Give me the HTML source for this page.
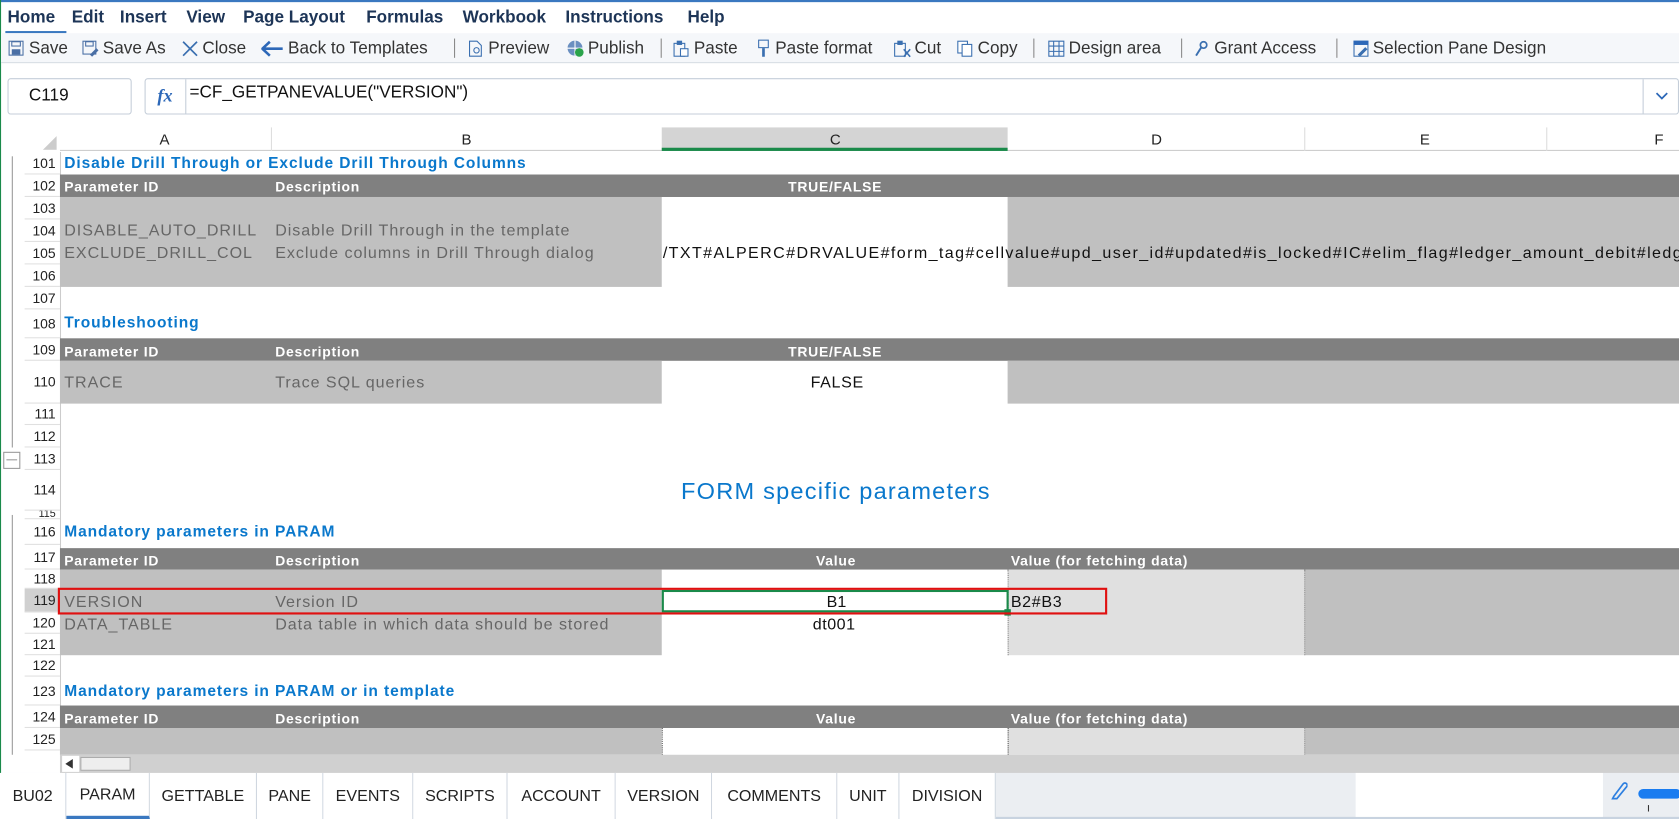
<!DOCTYPE html>
<html><head><meta charset="utf-8"><style>
*{margin:0;padding:0;box-sizing:border-box}
html,body{width:1679px;height:819px;overflow:hidden;background:#fff;font-family:"Liberation Sans",sans-serif}
#w{position:absolute;left:0;top:0;width:1568px;height:765px;transform:scale(1.07079,1.07059);transform-origin:0 0;overflow:hidden}
.a{position:absolute;white-space:nowrap}
.m{font-size:16px;font-weight:bold;color:#1d3557;top:8px}
.t{font-size:16px;color:#333;top:37px}
.sep{position:absolute;top:36px;width:1px;height:18px;background:#888}
.rh{position:absolute;left:23px;width:33px;text-align:right;padding-right:4px;font-size:13px;color:#222;border-bottom:1px solid #e0e0e0}
.ttl{color:#0a78cc;font-weight:bold;font-size:14.5px;letter-spacing:0.85px}
.hdr{background:#808080;color:#fff;font-weight:bold;font-size:13px;letter-spacing:0.7px}
.g{background:#c0c0c0}
.lg{background:#e0e0e0}
.c{font-size:15px;color:#666;letter-spacing:0.9px}
.tab{position:absolute;top:722px;height:43px;background:#fff;border-right:1px solid #d0d7e0;font-size:15px;color:#222;text-align:center;line-height:43px}
</style></head><body><div id="w">
<div class="a" style="left:0;top:0;width:1568px;height:2px;background:#3a78c0"></div>
<div class="a" style="left:0;top:0;width:1px;height:722px;background:#1a8a4a"></div>
<!-- menu -->
<div class="a m" style="left:7px">Home</div>
<div class="a" style="left:5px;top:29px;width:57px;height:2px;background:#3a78c0"></div>
<div class="a m" style="left:67px">Edit</div>
<div class="a m" style="left:112px">Insert</div>
<div class="a m" style="left:174px">View</div>
<div class="a m" style="left:227px">Page Layout</div>
<div class="a m" style="left:342px">Formulas</div>
<div class="a m" style="left:432px">Workbook</div>
<div class="a m" style="left:528px">Instructions</div>
<div class="a m" style="left:642px">Help</div>
<!-- toolbar -->
<div class="a" style="left:1px;top:31px;width:1567px;height:28px;background:#f5f7fa;border-bottom:1px solid #d8dde4"></div>
<svg class="a" style="left:7px;top:37px" width="16" height="16" viewBox="0 0 16 16"><rect x="1.5" y="1.5" width="13" height="13" fill="none" stroke="#4a6fa5"/><rect x="4" y="2" width="8" height="4" fill="none" stroke="#4a6fa5"/><rect x="4" y="9" width="8" height="5" fill="#4a6fa5"/></svg>
<div class="a t" style="left:27px">Save</div>
<svg class="a" style="left:76px;top:37px" width="16" height="16" viewBox="0 0 16 16"><rect x="1.5" y="1.5" width="12" height="12" fill="none" stroke="#4a6fa5"/><rect x="4" y="2" width="7" height="4" fill="none" stroke="#4a6fa5"/><path d="M8 14l6-6 2 2-6 6z" fill="#4a6fa5"/></svg>
<div class="a t" style="left:96px">Save As</div>
<svg class="a" style="left:170px;top:38px" width="15" height="15" viewBox="0 0 15 15"><path d="M1 1L14 14M14 1L1 14" stroke="#3a6fb0" stroke-width="1.6"/></svg>
<div class="a t" style="left:189px">Close</div>
<svg class="a" style="left:244px;top:38px" width="21" height="15" viewBox="0 0 21 15"><path d="M1 7.5H20M8 1L1 7.5 8 14" stroke="#2d68b8" stroke-width="2.4" fill="none"/></svg>
<div class="a t" style="left:269px">Back to Templates</div>
<div class="sep" style="left:424px"></div>
<svg class="a" style="left:437px;top:37px" width="14" height="17" viewBox="0 0 14 17"><path d="M1.5 1.5h7l4 4v10h-11z" fill="none" stroke="#3a6fb0"/><circle cx="8" cy="10" r="2.5" fill="none" stroke="#3a6fb0"/></svg>
<div class="a t" style="left:456px">Preview</div>
<svg class="a" style="left:529px;top:37px" width="17" height="17" viewBox="0 0 17 17"><circle cx="8" cy="8" r="7" fill="#6a8fc0"/><path d="M1 8h14M8 1v14" stroke="#fff"/><circle cx="12" cy="12" r="4" fill="#2aa34a"/></svg>
<div class="a t" style="left:549px">Publish</div>
<div class="sep" style="left:617px"></div>
<svg class="a" style="left:628px;top:37px" width="16" height="17" viewBox="0 0 16 17"><rect x="1.5" y="3.5" width="10" height="12" fill="none" stroke="#3a6fb0"/><rect x="4" y="1" width="5" height="4" fill="#3a6fb0"/><rect x="7.5" y="8.5" width="7" height="7" fill="#fff" stroke="#3a6fb0"/></svg>
<div class="a t" style="left:648px">Paste</div>
<svg class="a" style="left:707px;top:36px" width="12" height="18" viewBox="0 0 12 18"><rect x="1.5" y="1.5" width="9" height="7" fill="none" stroke="#3a6fb0"/><path d="M6 9v8" stroke="#3a6fb0" stroke-width="2.5"/></svg>
<div class="a t" style="left:724px">Paste format</div>
<svg class="a" style="left:834px;top:37px" width="17" height="17" viewBox="0 0 17 17"><rect x="1.5" y="3.5" width="10" height="12" fill="none" stroke="#3a6fb0"/><rect x="4" y="1" width="5" height="4" fill="#3a6fb0"/><path d="M10 9l6 7M16 9l-6 7" stroke="#3a6fb0" stroke-width="1.5"/></svg>
<div class="a t" style="left:854px">Cut</div>
<svg class="a" style="left:893px;top:37px" width="16" height="17" viewBox="0 0 16 17"><rect x="1.5" y="1.5" width="9" height="11" fill="#fff" stroke="#3a6fb0"/><rect x="5.5" y="4.5" width="9" height="11" fill="#fff" stroke="#3a6fb0"/></svg>
<div class="a t" style="left:913px">Copy</div>
<div class="sep" style="left:965px"></div>
<svg class="a" style="left:978px;top:37px" width="17" height="17" viewBox="0 0 17 17"><path d="M1.5 1.5h14v14h-14zM1.5 6h14M1.5 11h14M6 1.5v14M11 1.5v14" fill="none" stroke="#3a6fb0"/></svg>
<div class="a t" style="left:998px">Design area</div>
<div class="sep" style="left:1103px"></div>
<svg class="a" style="left:1116px;top:38px" width="12" height="16" viewBox="0 0 12 16"><circle cx="8" cy="4" r="3" fill="none" stroke="#3a6fb0" stroke-width="1.6"/><path d="M6 6L1 14" stroke="#3a6fb0" stroke-width="1.8"/></svg>
<div class="a t" style="left:1134px">Grant Access</div>
<div class="sep" style="left:1248px"></div>
<svg class="a" style="left:1263px;top:37px" width="16" height="17" viewBox="0 0 16 17"><rect x="1.5" y="1.5" width="13" height="14" fill="none" stroke="#3a6fb0"/><rect x="1" y="1" width="14" height="4" fill="#2d68b8"/><path d="M5 14l7-7 2 2-7 7z" fill="#3a6fb0"/></svg>
<div class="a t" style="left:1282px">Selection Pane Design</div>
<!-- formula bar -->
<div class="a" style="left:7px;top:73px;width:116px;height:34px;border:1px solid #c5ced9;border-radius:3px;font-size:16px;line-height:32px;padding-left:19px;color:#111">C119</div>
<div class="a" style="left:135px;top:73px;width:1433px;height:34px;border:1px solid #c5ced9;border-radius:3px"></div>
<div class="a" style="left:147px;top:80px;font-family:'Liberation Serif',serif;font-style:italic;font-weight:bold;font-size:17px;color:#2d68b8">fx</div>
<div class="a" style="left:173px;top:74px;width:1px;height:32px;background:#c5ced9"></div>
<div class="a" style="left:177px;top:78px;font-size:16px;color:#111">=CF_GETPANEVALUE("VERSION")</div>
<div class="a" style="left:1534px;top:74px;width:1px;height:32px;background:#c5ced9"></div>
<svg class="a" style="left:1546px;top:86px" width="12" height="8" viewBox="0 0 12 8"><path d="M1 1l5 5 5-5" stroke="#2d68b8" stroke-width="1.6" fill="none"/></svg>
<!-- column headers -->
<div class="a" style="left:56px;top:119px;width:1512px;height:22px;background:#fff;border-bottom:1px solid #ccc"></div>
<svg class="a" style="left:40px;top:127px" width="13" height="13"><path d="M13 0V13H0z" fill="#ccc"/></svg>
<div class="a" style="left:618px;top:119px;width:323px;height:22px;background:#d4d4d4;border-bottom:3px solid #1a8a4a"></div>
<div class="a" style="left:253px;top:119px;width:1px;height:22px;background:#ddd"></div>
<div class="a" style="left:1218px;top:119px;width:1px;height:22px;background:#ddd"></div>
<div class="a" style="left:1444px;top:119px;width:1px;height:22px;background:#ddd"></div>
<div class="a" style="left:149px;top:122px;font-size:14px;color:#222">A</div>
<div class="a" style="left:431px;top:122px;font-size:14px;color:#222">B</div>
<div class="a" style="left:775px;top:122px;font-size:14px;color:#222">C</div>
<div class="a" style="left:1075px;top:122px;font-size:14px;color:#222">D</div>
<div class="a" style="left:1326px;top:122px;font-size:14px;color:#222">E</div>
<div class="a" style="left:1545px;top:122px;font-size:14px;color:#222">F</div>
<!-- outline bars -->
<div class="a" style="left:11px;top:146px;width:1px;height:272px;background:#999"></div>
<div class="a" style="left:3px;top:422px;width:16px;height:16px;border:1px solid #999;background:#fff"></div>
<div class="a" style="left:6px;top:429px;width:10px;height:1px;background:#999"></div>
<div class="a" style="left:11px;top:481px;width:1px;height:224px;background:#999"></div>
<!-- row headers -->
<div class="rh" style="top:142px;height:21px;line-height:21px">101</div>
<div class="rh" style="top:163px;height:21px;line-height:21px">102</div>
<div class="rh" style="top:184px;height:21px;line-height:21px">103</div>
<div class="rh" style="top:205px;height:21px;line-height:21px">104</div>
<div class="rh" style="top:226px;height:21px;line-height:21px">105</div>
<div class="rh" style="top:247px;height:21px;line-height:21px">106</div>
<div class="rh" style="top:268px;height:21px;line-height:21px">107</div>
<div class="rh" style="top:289px;height:27px;line-height:27px">108</div>
<div class="rh" style="top:316px;height:21px;line-height:21px">109</div>
<div class="rh" style="top:337px;height:40px;line-height:40px">110</div>
<div class="rh" style="top:377px;height:20px;line-height:20px">111</div>
<div class="rh" style="top:397px;height:21px;line-height:21px">112</div>
<div class="rh" style="top:418px;height:21px;line-height:21px">113</div>
<div class="rh" style="top:439px;height:38px;line-height:38px">114</div>
<div class="rh" style="top:477px;height:8px;line-height:8px;overflow:hidden;font-size:10px">115</div>
<div class="rh" style="top:485px;height:24px;line-height:24px">116</div>
<div class="rh" style="top:509px;height:23px;line-height:23px">117</div>
<div class="rh" style="top:532px;height:18px;line-height:18px">118</div>
<div class="rh" style="top:550px;height:22px;line-height:22px;background:#d0d0d0">119</div>
<div class="rh" style="top:572px;height:20px;line-height:20px">120</div>
<div class="rh" style="top:592px;height:20px;line-height:20px">121</div>
<div class="rh" style="top:612px;height:20px;line-height:20px">122</div>
<div class="rh" style="top:632px;height:27px;line-height:27px">123</div>
<div class="rh" style="top:659px;height:21px;line-height:21px">124</div>
<div class="rh" style="top:680px;height:21px;line-height:21px">125</div>
<div class="a" style="left:56px;top:142px;width:1px;height:563px;background:#ccc"></div>
<!-- rows content -->
<div class="a ttl" style="left:60px;top:145px">Disable Drill Through or Exclude Drill Through Columns</div>
<div class="a hdr" style="left:56px;top:163px;width:1512px;height:21px"></div>
<div class="a hdr" style="left:60px;top:167px">Parameter ID</div>
<div class="a hdr" style="left:257px;top:167px">Description</div>
<div class="a hdr" style="left:736px;top:167px">TRUE/FALSE</div>
<div class="a g" style="left:56px;top:184px;width:562px;height:84px"></div>
<div class="a g" style="left:941px;top:184px;width:627px;height:84px"></div>
<div class="a c" style="left:60px;top:207px">DISABLE_AUTO_DRILL</div>
<div class="a c" style="left:257px;top:207px">Disable Drill Through in the template</div>
<div class="a c" style="left:60px;top:228px">EXCLUDE_DRILL_COL</div>
<div class="a c" style="left:257px;top:228px">Exclude columns in Drill Through dialog</div>
<div class="a" style="left:619px;top:228px;font-size:15px;color:#111;width:949px;overflow:hidden;letter-spacing:1.3px">/TXT#ALPERC#DRVALUE#form_tag#cellvalue#upd_user_id#updated#is_locked#IC#elim_flag#ledger_amount_debit#ledger_amount_credit</div>
<div class="a ttl" style="left:60px;top:294px">Troubleshooting</div>
<div class="a hdr" style="left:56px;top:316px;width:1512px;height:21px"></div>
<div class="a hdr" style="left:60px;top:321px">Parameter ID</div>
<div class="a hdr" style="left:257px;top:321px">Description</div>
<div class="a hdr" style="left:736px;top:321px">TRUE/FALSE</div>
<div class="a g" style="left:56px;top:337px;width:562px;height:40px"></div>
<div class="a g" style="left:941px;top:337px;width:627px;height:40px"></div>
<div class="a c" style="left:60px;top:349px">TRACE</div>
<div class="a c" style="left:257px;top:349px">Trace SQL queries</div>
<div class="a" style="left:757px;top:349px;font-size:15px;color:#111;letter-spacing:0.6px">FALSE</div>
<div class="a" style="left:636px;top:446px;font-size:22px;color:#0a78cc;letter-spacing:1.15px">FORM specific parameters</div>
<div class="a ttl" style="left:60px;top:489px">Mandatory parameters in PARAM</div>
<div class="a hdr" style="left:56px;top:512px;width:1512px;height:20px"></div>
<div class="a hdr" style="left:60px;top:516px">Parameter ID</div>
<div class="a hdr" style="left:257px;top:516px">Description</div>
<div class="a hdr" style="left:762px;top:516px">Value</div>
<div class="a hdr" style="left:944px;top:516px">Value (for fetching data)</div>
<div class="a g" style="left:56px;top:532px;width:562px;height:80px"></div>
<div class="a lg" style="left:941px;top:532px;width:277px;height:80px;border-left:1px dotted #888"></div>
<div class="a g" style="left:1218px;top:532px;width:350px;height:80px;border-left:1px dotted #999"></div>
<div class="a c" style="left:60px;top:554px">VERSION</div>
<div class="a c" style="left:257px;top:554px">Version ID</div>
<div class="a" style="left:618px;top:551px;width:324px;height:21px;border:2px solid #1a8a4a"></div>
<div class="a" style="left:938px;top:569px;width:6px;height:6px;background:#1a8a4a"></div>
<div class="a" style="left:772px;top:554px;font-size:15px;color:#111">B1</div>
<div class="a" style="left:944px;top:554px;font-size:15px;color:#111;letter-spacing:0.6px">B2#B3</div>
<div class="a" style="left:54px;top:549px;width:980px;height:25px;border:2.5px solid #e01010"></div>
<div class="a c" style="left:60px;top:575px">DATA_TABLE</div>
<div class="a c" style="left:257px;top:575px">Data table in which data should be stored</div>
<div class="a" style="left:759px;top:575px;font-size:15px;color:#111;letter-spacing:0.5px">dt001</div>
<div class="a ttl" style="left:60px;top:638px">Mandatory parameters in PARAM or in template</div>
<div class="a hdr" style="left:56px;top:659px;width:1512px;height:21px"></div>
<div class="a hdr" style="left:60px;top:664px">Parameter ID</div>
<div class="a hdr" style="left:257px;top:664px">Description</div>
<div class="a hdr" style="left:762px;top:664px">Value</div>
<div class="a hdr" style="left:944px;top:664px">Value (for fetching data)</div>
<div class="a g" style="left:56px;top:680px;width:562px;height:25px"></div>
<div class="a" style="left:618px;top:680px;width:323px;height:25px;border-left:1px dotted #555"></div>
<div class="a lg" style="left:941px;top:680px;width:277px;height:25px;border-left:1px dotted #555"></div>
<div class="a g" style="left:1218px;top:680px;width:350px;height:25px;border-left:1px dotted #999"></div>
<!-- scrollbar -->
<div class="a" style="left:56px;top:705px;width:1512px;height:17px;background:#d0d0d0"></div>
<div class="a" style="left:58px;top:706px;width:16px;height:15px;background:#fff"></div>
<svg class="a" style="left:61px;top:709px" width="8" height="9"><path d="M7 0V9L0 4.5z" fill="#333"/></svg>
<div class="a" style="left:75px;top:707px;width:47px;height:13px;background:#eee;border:1px solid #aaa"></div>
<!-- tabs -->
<div class="a" style="left:0;top:722px;width:1568px;height:43px;background:#ebeef2;border-bottom:2px solid #c8d3e0"></div>
<div class="tab" style="left:0;width:62px">BU02</div>
<div class="tab" style="left:62px;width:78px;border-bottom:3px solid #3a78c0;line-height:41px">PARAM</div>
<div class="tab" style="left:140px;width:100px">GETTABLE</div>
<div class="tab" style="left:240px;width:62px">PANE</div>
<div class="tab" style="left:302px;width:84px">EVENTS</div>
<div class="tab" style="left:386px;width:88px">SCRIPTS</div>
<div class="tab" style="left:474px;width:101px">ACCOUNT</div>
<div class="tab" style="left:575px;width:90px">VERSION</div>
<div class="tab" style="left:665px;width:117px">COMMENTS</div>
<div class="tab" style="left:782px;width:58px">UNIT</div>
<div class="tab" style="left:840px;width:90px">DIVISION</div>
<div class="a" style="left:1266px;top:722px;width:231px;height:41px;background:#fff"></div>
<svg class="a" style="left:1504px;top:729px" width="16" height="18" viewBox="0 0 16 18"><path d="M3 15L12 3a2 2 0 013 3L6 17 2 17z" fill="none" stroke="#2d7fe0" stroke-width="1.6"/></svg>
<div class="a" style="left:1530px;top:737px;width:40px;height:9px;border-radius:5px;background:#1a7cf0"></div>
<div class="a" style="left:1539px;top:752px;width:1px;height:6px;background:#333"></div>
</div></body></html>
